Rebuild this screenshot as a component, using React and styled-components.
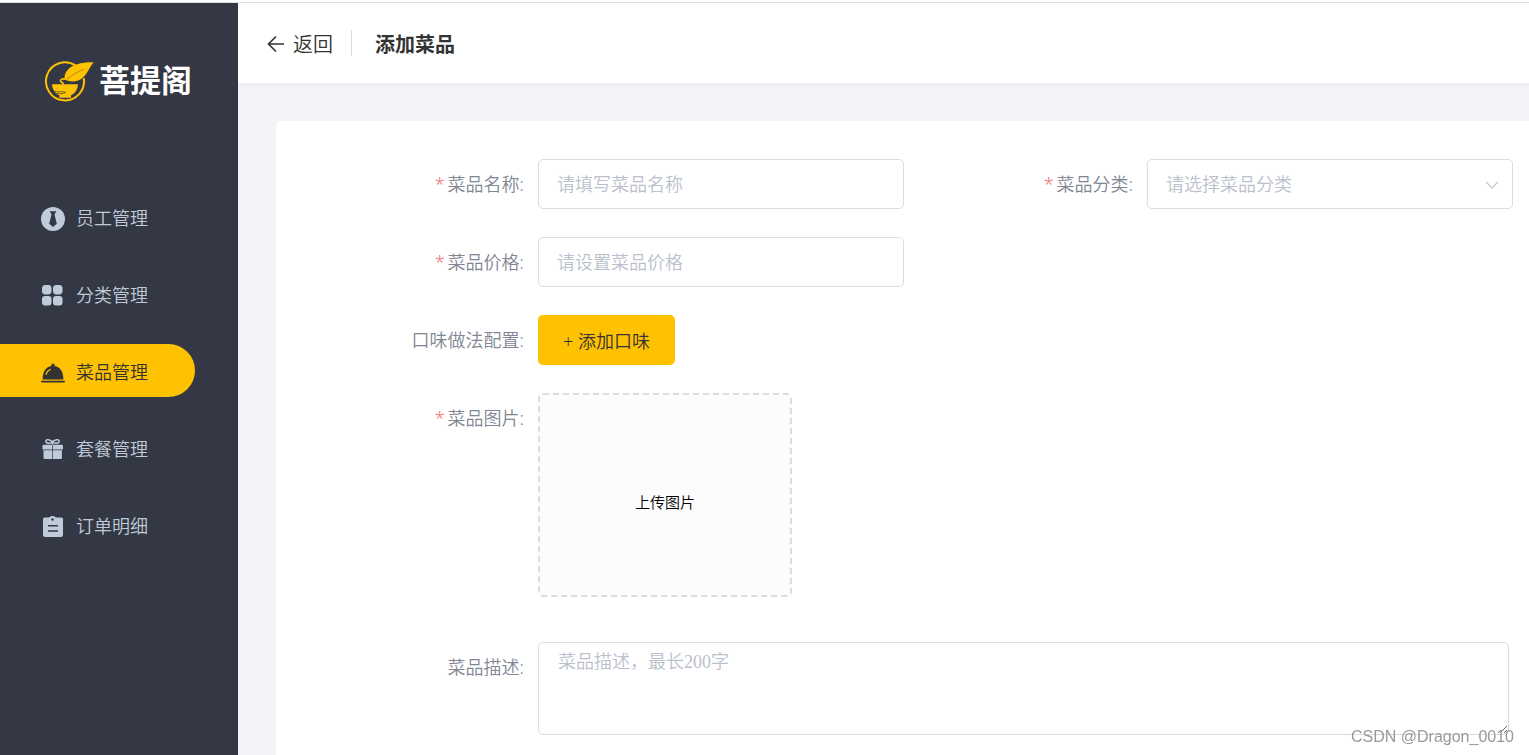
import { useState } from "react";
import styled, { createGlobalStyle } from "styled-components";

const menu = [
  { name: "员工管理", icon: <TieIcon /> },
  { name: "分类管理", icon: <GridIcon /> },
  { name: "菜品管理", icon: <DishIcon /> },
  { name: "套餐管理", icon: <GiftIcon /> },
  { name: "订单明细", icon: <OrderIcon /> },
];

function App() {
  const [active, setActive] = useState("菜品管理");

  return (
    <Page>
      <GlobalStyle />
      <Sidebar>
        <Logo>
          <LogoMark />
          <LogoText>菩提阁</LogoText>
        </Logo>
        <Menu>
          {menu.map((item) => (
            <MenuItem
              key={item.name}
              href="#"
              $active={item.name === active}
              onClick={() => setActive(item.name)}
            >
              {item.icon}
              <span>{item.name}</span>
            </MenuItem>
          ))}
        </Menu>
      </Sidebar>
      <Main>
        <Header>
          <BackLink href="#">
            <ArrowIcon />
            返回
          </BackLink>
          <Title>添加菜品</Title>
        </Header>
        <Card>
          <Label htmlFor="name" $required>菜品名称:</Label>
          <Input id="name" type="text" placeholder="请填写菜品名称" />
          <Label htmlFor="category" $required>菜品分类:</Label>
          <SelectWrap>
            <Select id="category" defaultValue="">
              <option value="" disabled>请选择菜品分类</option>
              <option value="1">湘菜</option>
              <option value="2">川菜</option>
            </Select>
            <ChevronIcon />
          </SelectWrap>

          <Label htmlFor="price" $required $start>菜品价格:</Label>
          <Input id="price" type="text" placeholder="请设置菜品价格" />

          <Label as="span" $start>口味做法配置:</Label>
          <Wide>
            <Button type="button">+ 添加口味</Button>
          </Wide>

          <Label htmlFor="image" $required $start>菜品图片:</Label>
          <Wide>
            <Upload>
              <FileInput id="image" type="file" />
              上传图片
            </Upload>
          </Wide>

          <Label htmlFor="desc" $start>菜品描述:</Label>
          <Wide>
            <Textarea id="desc" placeholder="菜品描述，最长200字" />
          </Wide>
        </Card>
      </Main>
      <Watermark>CSDN @Dragon_0010</Watermark>
    </Page>
  );
}

function LogoMark() {
  return (
    <svg width="50" height="42" viewBox="42 30 150 126" fill="#ffc200">
      <path
        d="M137 47 A57 57 0 1 0 161 84"
        fill="none"
        stroke="#ffc200"
        strokeWidth="6"
      />
      <path d="M191 37 C160 36 125 43 111 62 C103 72 104 82 103 88 C112 95 135 97 150 89 C172 77 176 54 191 37 Z" />
      <path
        d="M162 57 C142 66 124 76 110 88"
        fill="none"
        stroke="#8a7030"
        strokeWidth="2"
      />
      <path
        d="M108 88 C96 84 88 90 93 95 C98 98 101 99 100 104"
        fill="none"
        stroke="#ffc200"
        strokeWidth="5"
      />
      <path d="M66 103 H144 C143 119 136 130 123 136 V143 H88 V136 C75 130 67 119 66 103 Z" />
      <path
        d="M71 123 C82 129 94 122 107 127 C98 132 88 132 80 130"
        fill="none"
        stroke="#343744"
        strokeWidth="2"
      />
    </svg>
  );
}

function TieIcon() {
  return (
    <svg width="24" height="24" viewBox="0 0 24 24">
      <circle cx="12" cy="12" r="12" fill="currentColor" />
      <path d="M8.7 4.2h6.6l-1.8 3.2 2.3 9.4-3.8 3.2-3.8-3.2 2.3-9.4z" fill="#343744" />
    </svg>
  );
}

function GridIcon() {
  return (
    <svg width="24" height="24" viewBox="0 0 24 24" fill="currentColor">
      <rect x="1" y="1" width="9.5" height="9.5" rx="3.4" />
      <rect x="12" y="1" width="9.5" height="9.5" rx="3.4" />
      <rect x="1" y="12" width="9.5" height="9.5" rx="3" />
      <rect x="12" y="12" width="9.5" height="9.5" rx="3" />
    </svg>
  );
}

function DishIcon() {
  return (
    <svg width="24" height="24" viewBox="0 0 24 24" fill="currentColor">
      <path d="M12 2.6a1.7 1.7 0 0 1 1.6 2.3C18.9 5.7 22.4 10 22.4 18.6H1.6C1.6 10 5.1 5.7 10.4 4.9A1.7 1.7 0 0 1 12 2.6z" />
      <path d="M5 13.2C5.8 10.7 7.2 9.3 9.2 8.5" fill="none" stroke="#ffc200" strokeWidth="1.3" strokeLinecap="round" />
      <rect x="0" y="19.7" width="24" height="1.8" rx="0.9" />
    </svg>
  );
}

function GiftIcon() {
  return (
    <svg width="24" height="24" viewBox="0 0 24 24" fill="currentColor">
      <path d="M2.5 6.8h8.7v4.8H1.5V7.8a1 1 0 0 1 1-1zM11.9 6.8h9a1 1 0 0 1 1 1v3.8h-10z" />
      <path d="M2.500 12.200h8.700V21H3.500a1 1 0 0 1-1-1zM11.900 12.200h9V20a1 1 0 0 1-1 1h-8z" />
      <path
        d="M11.5 4.8C9.8 1.2 4.8 0.8 4.8 3.3c0 2.3 5 2.800 6.700 0 1.700 2.800 6.700 2.300 6.700 0 0-2.500-5-2.100-6.700 1.500v2"
        fill="none"
        stroke="currentColor"
        strokeWidth="1.4"
      />
    </svg>
  );
}

function OrderIcon() {
  return (
    <svg width="24" height="24" viewBox="0 0 24 24">
      <path
        d="M3.5 2.5H8C9 1.6 10 1 11.5 1S14 1.6 15 2.5h5.5a1.5 1.5 0 0 1 1.5 1.5v16a2 2 0 0 1-2 2H4a2 2 0 0 1-2-2V4a1.5 1.5 0 0 1 1.5-1.5z"
        fill="currentColor"
      />
      <circle cx="11.5" cy="4.5" r="1.2" fill="#343744" />
      <path d="M7 10.7h10M7 16h10" stroke="#343744" strokeWidth="1.6" />
    </svg>
  );
}

function ArrowIcon() {
  return (
    <svg width="18" height="18" viewBox="0 0 18 18" fill="none" stroke="#333" strokeWidth="1.6">
      <path d="M17 10H1.5M9 2.5L1.5 10 9 17.5" />
    </svg>
  );
}

function ChevronIcon() {
  return (
    <Chevron width="14" height="8" viewBox="0 0 14 8" fill="none" stroke="#c0c4cc" strokeWidth="1.2">
      <path d="M1 1l6 6 6-6" />
    </Chevron>
  );
}

const GlobalStyle = createGlobalStyle`
  * {
    box-sizing: border-box;
  }
  body {
    margin: 0;
    font-family: "Noto Sans", "Noto Sans CJK SC", sans-serif;
    font-size: 18px;
    font-weight: 350;
    color: #333;
  }
  a {
    color: inherit;
    text-decoration: none;
  }
  svg {
    flex: none;
  }
`;

const Page = styled.div`
  display: flex;
  min-height: 100vh;
  padding-top: 2px;
  background: #fff;
`;

const Sidebar = styled.aside`
  flex: none;
  width: 238px;
  padding-top: 57px;
  background: #343744;
  border-top: 1px solid #dcdfe6;
`;

const Logo = styled.div`
  display: flex;
  align-items: center;
  gap: 5px;
  height: 42px;
  margin-bottom: 88px;
  padding-left: 44px;
`;

const LogoText = styled.span`
  padding-bottom: 2px;
  font-size: 31px;
  line-height: 40px;
  font-weight: 700;
  color: #fff;
`;

const Menu = styled.nav`
  display: flex;
  flex-direction: column;
  gap: 24px;
`;

const MenuItem = styled.a`
  display: flex;
  align-items: center;
  gap: 11px;
  width: 195px;
  height: 53px;
  padding: 1px 0 0 41px;
  border-radius: 0 27px 27px 0;
  color: ${(props) => (props.$active ? "#333" : "#bfcbd9")};
  background: ${(props) => (props.$active ? "#ffc200" : "transparent")};
  svg {
    margin-top: 4px;
  }
`;

const Main = styled.main`
  flex: 1;
  min-width: 0;
  display: flex;
  flex-direction: column;
  background: #f3f4f7;
  border-top: 1px solid #dcdfe6;
`;

const Header = styled.header`
  display: flex;
  align-items: center;
  height: 80px;
  padding-left: 29px;
  font-size: 20px;
  background: #fff;
  box-shadow: 0 2px 6px rgba(0, 0, 0, 0.04);
`;

const BackLink = styled.a`
  display: flex;
  align-items: center;
  gap: 8px;
  height: 26px;
  padding-right: 18px;
  border-right: 1px solid #d8dde3;
`;

const Title = styled.h1`
  margin: 0 0 0 23px;
  font-size: 20px;
  font-weight: 700;
`;

const Card = styled.form`
  flex: 1;
  display: grid;
  grid-template-columns: 262px 1fr 243px 1fr;
  align-content: start;
  row-gap: 28px;
  margin: 38px 0 0 38px;
  padding: 38px 16px 20px 0;
  border-radius: 5px 0 0 0;
  background: #fff;
`;

const Label = styled.label`
  grid-column-start: ${(props) => (props.$start ? 1 : "auto")};
  padding-right: 14px;
  line-height: 50px;
  text-align: right;
  color: #818693;
  &::before {
    content: "${(props) => (props.$required ? "*" : "")}";
    margin-right: 3px;
    color: #f56c6c;
  }
`;

const Input = styled.input`
  width: 100%;
  height: 50px;
  padding: 0 18px 1px;
  border: 1px solid #d8dde3;
  border-radius: 5px;
  font: inherit;
  color: #333;
  background: #fff;
  outline: none;
  &::placeholder {
    color: #bac0cd;
  }
`;

const SelectWrap = styled.div`
  position: relative;
`;

const Select = styled(Input).attrs({ as: "select" })`
  appearance: none;
  color: #bac0cd;
`;

const Chevron = styled.svg`
  position: absolute;
  top: 22px;
  right: 14px;
  pointer-events: none;
`;

const Wide = styled.div`
  grid-column: 2 / -1;
  display: flex;
`;

const Button = styled.button`
  height: 50px;
  padding: 0 25px;
  border: 0;
  border-radius: 5px;
  font: inherit;
  color: #333;
  background: #ffc200;
  cursor: pointer;
`;

const Upload = styled.label`
  display: flex;
  align-items: center;
  justify-content: center;
  width: 254px;
  height: 204px;
  margin-bottom: 17px;
  padding-top: 12px;
  border: 2px dashed #d8dde3;
  border-radius: 5px;
  font-size: 15px;
  color: #000;
  background: #fcfcfc;
  cursor: pointer;
`;

const FileInput = styled.input`
  position: absolute;
  width: 1px;
  height: 1px;
  opacity: 0;
`;

const Textarea = styled.textarea`
  flex: 1;
  height: 93px;
  margin-right: 4px;
  padding: 6px 19px;
  border: 1px solid #d8dde3;
  border-radius: 5px;
  font-family: "Liberation Serif", "Noto Sans CJK SC", serif;
  font-size: 18px;
  font-weight: 350;
  line-height: 27px;
  resize: vertical;
  outline: none;
  &::placeholder {
    color: #bac0cd;
  }
`;

const Watermark = styled.div`
  position: fixed;
  right: 15px;
  bottom: 7px;
  font-family: "Liberation Sans", sans-serif;
  font-size: 16px;
  line-height: 22px;
  font-weight: 400;
  color: #999;
  pointer-events: none;
`;

export default App;
